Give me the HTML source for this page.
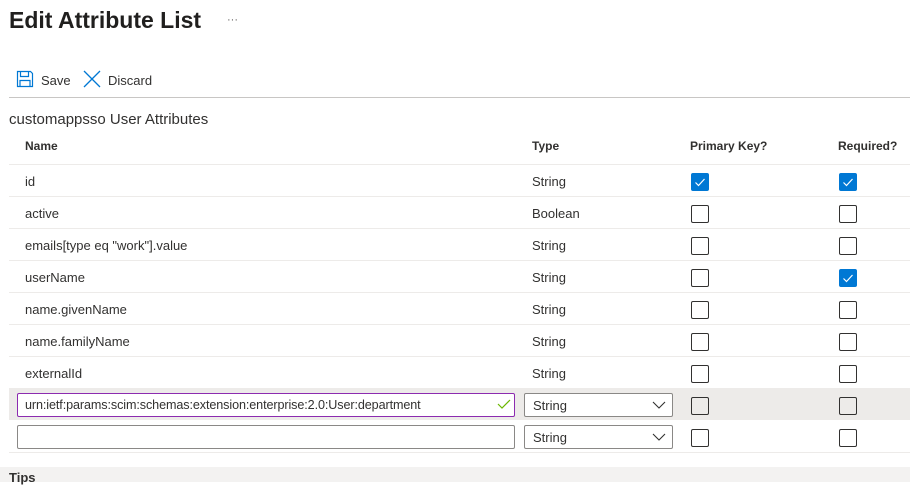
<!DOCTYPE html>
<html><head><style>
body{margin:0;width:910px;height:482px;overflow:hidden;background:#fff;font-family:"Liberation Sans",sans-serif;color:#323130;position:relative}
.a{position:absolute}
.t{font-size:13px;white-space:nowrap}
.cb{position:absolute;width:16px;height:16px;border:1px solid #323130;border-radius:2px;background:#fff}
.cb.on{background:#0078d4;border-color:#0078d4}
.ln{position:absolute;left:9px;width:901px;height:1px;background:#edebe9}
.sel{position:absolute;left:524px;width:147px;height:22px;border:1px solid #8a8886;border-radius:2px;background:#fff}
</style></head><body>
<div class="a" style="left:9px;top:7px;font-size:23px;font-weight:bold;color:#201f1e">Edit Attribute List</div>
<div class="a t" style="left:227px;top:14px;color:#605e5c;font-size:11px">···</div>
<svg class="a" style="left:16px;top:70px" width="18" height="18" viewBox="0 0 18 18"><path d="M1.5 1.5h13l2 2v13h-15z M4.5 1.5v5h8v-5 M4 16.5v-6h10v6" fill="none" stroke="#0078d4" stroke-width="1.2"/></svg>
<div class="a t" style="left:41px;top:73px">Save</div>
<svg class="a" style="left:83px;top:70px" width="18" height="18"><path d="M1 1L17 17M17 1L1 17" stroke="#0078d4" stroke-width="1.3"/></svg>
<div class="a t" style="left:108px;top:73px">Discard</div>
<div class="a" style="left:9px;top:97px;width:901px;height:1px;background:#c8c6c4"></div>
<div class="a" style="left:9px;top:111px;font-size:15px">customappsso User Attributes</div>
<div class="a t" style="left:25px;top:139px;font-weight:bold;font-size:12px">Name</div>
<div class="a t" style="left:532px;top:139px;font-weight:bold;font-size:12px">Type</div>
<div class="a t" style="left:690px;top:139px;font-weight:bold;font-size:12px">Primary Key?</div>
<div class="a t" style="left:838px;top:139px;font-weight:bold;font-size:12px">Required?</div>
<div class="ln" style="top:164px"></div>
<div class="ln" style="top:196px"></div>
<div class="ln" style="top:228px"></div>
<div class="ln" style="top:260px"></div>
<div class="ln" style="top:292px"></div>
<div class="ln" style="top:324px"></div>
<div class="ln" style="top:356px"></div>
<div class="a" style="left:9px;top:388px;width:901px;height:32px;background:#edebe9"></div>
<div class="ln" style="top:452px"></div>

<div class="a t" style="left:25px;top:174px">id</div><div class="a t" style="left:532px;top:174px">String</div>
<div class="a t" style="left:25px;top:206px">active</div><div class="a t" style="left:532px;top:206px">Boolean</div>
<div class="a t" style="left:25px;top:238px">emails[type eq "work"].value</div><div class="a t" style="left:532px;top:238px">String</div>
<div class="a t" style="left:25px;top:270px">userName</div><div class="a t" style="left:532px;top:270px">String</div>
<div class="a t" style="left:25px;top:302px">name.givenName</div><div class="a t" style="left:532px;top:302px">String</div>
<div class="a t" style="left:25px;top:334px">name.familyName</div><div class="a t" style="left:532px;top:334px">String</div>
<div class="a t" style="left:25px;top:366px">externalId</div><div class="a t" style="left:532px;top:366px">String</div>

<div class="cb on" style="left:691px;top:173px"><svg width="16" height="16"><path d="M3.5 8.5l3 3 6-6.5" fill="none" stroke="#fff" stroke-width="1.2"/></svg></div>
<div class="cb on" style="left:839px;top:173px"><svg width="16" height="16"><path d="M3.5 8.5l3 3 6-6.5" fill="none" stroke="#fff" stroke-width="1.2"/></svg></div>
<div class="cb" style="left:691px;top:205px"></div><div class="cb" style="left:839px;top:205px"></div>
<div class="cb" style="left:691px;top:237px"></div><div class="cb" style="left:839px;top:237px"></div>
<div class="cb" style="left:691px;top:269px"></div>
<div class="cb on" style="left:839px;top:269px"><svg width="16" height="16"><path d="M3.5 8.5l3 3 6-6.5" fill="none" stroke="#fff" stroke-width="1.2"/></svg></div>
<div class="cb" style="left:691px;top:301px"></div><div class="cb" style="left:839px;top:301px"></div>
<div class="cb" style="left:691px;top:333px"></div><div class="cb" style="left:839px;top:333px"></div>
<div class="cb" style="left:691px;top:365px"></div><div class="cb" style="left:839px;top:365px"></div>
<div class="cb" style="left:691px;top:397px;background:#edebe9"></div><div class="cb" style="left:839px;top:397px;background:#edebe9"></div>
<div class="cb" style="left:691px;top:429px"></div><div class="cb" style="left:839px;top:429px"></div>

<div class="a" style="left:17px;top:393px;width:496px;height:22px;border:1px solid #8c2bb0;border-radius:2px;background:#fff"></div>
<div class="a t" style="left:25px;top:398px;font-size:12.6px;letter-spacing:-0.1px">urn:ietf:params:scim:schemas:extension:enterprise:2.0:User:department</div>
<svg class="a" style="left:497px;top:398px" width="14" height="12"><path d="M1 6l4 4 8-8" fill="none" stroke="#6bb700" stroke-width="1.2"/></svg>
<div class="a" style="left:17px;top:425px;width:496px;height:22px;border:1px solid #8a8886;border-radius:2px;background:#fff"></div>

<div class="sel" style="top:393px"></div><div class="a t" style="left:533px;top:398px">String</div>
<svg class="a" style="left:652px;top:401px" width="14" height="8"><path d="M1 1l6 6 6-6" fill="none" stroke="#323130" stroke-width="1.1"/></svg>
<div class="sel" style="top:425px"></div><div class="a t" style="left:533px;top:430px">String</div>
<svg class="a" style="left:652px;top:433px" width="14" height="8"><path d="M1 1l6 6 6-6" fill="none" stroke="#323130" stroke-width="1.1"/></svg>

<div class="a" style="left:0;top:467px;width:910px;height:15px;background:#f3f2f1"></div>
<div class="a t" style="left:9px;top:470px;font-weight:bold">Tips</div>
</body></html>
